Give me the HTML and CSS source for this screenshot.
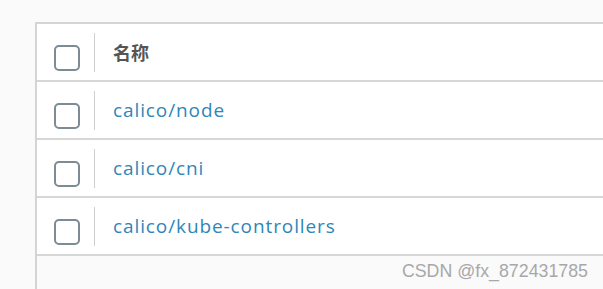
FILE: index.html
```html
<!DOCTYPE html>
<html lang="en">
<head>
    <meta charset="UTF-8">
    <meta name="viewport" content="width=device-width, initial-scale=1.0">
    <title>Images</title>
    <link rel="stylesheet" href="styles.css">
</head>
<body>
    <section class="grid">
        <div class="grid-row grid-head">
            <div class="grid-check"><span class="checkbox"></span></div>
            <div class="grid-cell">名称</div>
        </div>
        <div class="grid-row">
            <div class="grid-check"><span class="checkbox"></span></div>
            <div class="grid-cell"><a href="#">calico/node</a></div>
        </div>
        <div class="grid-row">
            <div class="grid-check"><span class="checkbox"></span></div>
            <div class="grid-cell"><a href="#">calico/cni</a></div>
        </div>
        <div class="grid-row">
            <div class="grid-check"><span class="checkbox"></span></div>
            <div class="grid-cell"><a href="#">calico/kube-controllers</a></div>
        </div>
        <div class="grid-foot"></div>
    </section>
    <p class="watermark">CSDN @fx_872431785</p>
</body>
</html>
```

FILE: styles.css
```css
body {
    margin: 0;
    padding: 0;
    background-color: #fafafa;
    font-family: "Open Sans", "Noto Sans CJK SC", sans-serif;
    height: 289px;
    overflow: hidden;
    position: relative;
}

.grid {
    margin: 22px 0 0 35px;
    border-top: 2px solid #d4d4d4;
    border-left: 2px solid #d4d4d4;
    background-color: #fff;
}

.grid-row {
    display: flex;
    align-items: center;
    height: 56px;
    border-bottom: 2px solid #d7d7d7;
}

.grid-check {
    width: 57px;
    display: flex;
    justify-content: center;
    padding-top: 12px;
    padding-left: 2px;
    box-sizing: border-box;
}

.checkbox {
    display: block;
    width: 22px;
    height: 22px;
    border: 2px solid #7d8b94;
    border-radius: 5px;
    background: #fff;
}

.grid-cell {
    height: 39px;
    border-left: 1px solid #cfcfcf;
    padding-left: 18px;
    display: flex;
    align-items: center;
    font-size: 19px;
    letter-spacing: 0.9px;
}

.grid-head .grid-cell {
    font-size: 18px;
    font-weight: bold;
    color: #555;
    letter-spacing: 0;
}

.grid-cell a {
    color: #2f86b8;
    text-decoration: none;
}

.grid-foot {
    height: 40px;
    background-color: #fafafa;
}

.watermark {
    position: absolute;
    right: 15px;
    bottom: 7px;
    margin: 0;
    font-family: "Liberation Sans", sans-serif;
    font-size: 17.8px;
    color: #a8a8a8;
}
```
